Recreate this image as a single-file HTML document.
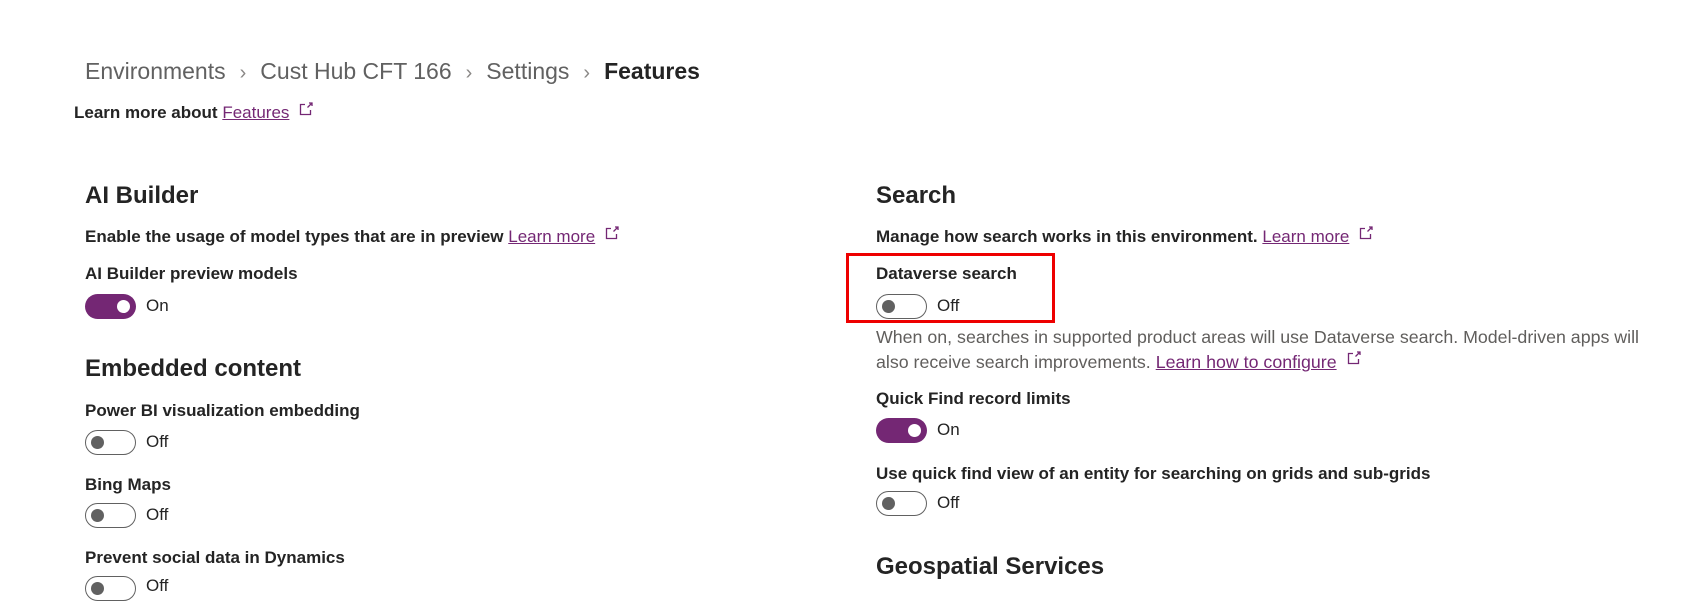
<!DOCTYPE html>
<html><head><meta charset="utf-8"><style>
body{margin:0;width:1700px;height:590px;background:#fff;position:relative;overflow:hidden;font-family:"Liberation Sans",sans-serif;color:#242424}
.a{position:absolute;white-space:nowrap;line-height:24px}
.bc{font-size:23px;color:#616161}
.bc i{font-style:normal;color:#8a8886;font-size:20px;padding:0 14px}
.h{font-size:24px;font-weight:bold;color:#242424;line-height:30px}
.t{font-size:17px;color:#242424;font-weight:bold}
.d{font-size:17.8px;color:#605e5c;line-height:26px}
a{color:#742774;text-decoration:underline;font-weight:normal}
.ext{display:inline-block;width:14px;height:14px;margin-left:10px;position:relative;top:-5px;vertical-align:middle}
.tg{position:absolute;width:51px;height:25px;border-radius:13px;box-sizing:border-box}
.off{border:1px solid #616161;background:#fff}
.off::after{content:"";position:absolute;left:5px;top:5px;width:13px;height:13px;border-radius:50%;background:#616161}
.on{background:#742774}
.on::after{content:"";position:absolute;right:6px;top:6px;width:13px;height:13px;border-radius:50%;background:#fff}
.tl{position:absolute;font-size:17px;color:#242424;line-height:24px}
</style></head><body>
<svg width="0" height="0" style="position:absolute"><symbol id="x" viewBox="0 0 14 14"><path d="M6 2.5H1.5V12.5H11.5V8M8.5 5.5L13 1M10 1H13V4" fill="none" stroke="#742774" stroke-width="1.3"/></symbol></svg>
<div class="a bc" style="left:85px;top:59px">Environments<i>&#x203A;</i>Cust Hub CFT 166<i>&#x203A;</i>Settings<i>&#x203A;</i><b style="color:#242424">Features</b></div>
<div class="a t" style="left:74px;top:101px">Learn more about <a>Features</a><svg class="ext"><use href="#x"/></svg></div>

<div class="a h" style="left:85px;top:181px">AI Builder</div>
<div class="a t" style="left:85px;top:225px">Enable the usage of model types that are in preview <a>Learn more</a><svg class="ext"><use href="#x"/></svg></div>
<div class="a t" style="left:85px;top:262px">AI Builder preview models</div>
<div class="tg on" style="left:85px;top:294px"></div><div class="tl" style="left:146px;top:294px">On</div>

<div class="a h" style="left:85px;top:354px">Embedded content</div>
<div class="a t" style="left:85px;top:399px">Power BI visualization embedding</div>
<div class="tg off" style="left:85px;top:430px"></div><div class="tl" style="left:146px;top:430px">Off</div>
<div class="a t" style="left:85px;top:473px">Bing Maps</div>
<div class="tg off" style="left:85px;top:503px"></div><div class="tl" style="left:146px;top:503px">Off</div>
<div class="a t" style="left:85px;top:546px">Prevent social data in Dynamics</div>
<div class="tg off" style="left:85px;top:576px"></div><div class="tl" style="left:146px;top:574px">Off</div>

<div class="a h" style="left:876px;top:181px">Search</div>
<div class="a t" style="left:876px;top:225px">Manage how search works in this environment. <a>Learn more</a><svg class="ext"><use href="#x"/></svg></div>
<div style="position:absolute;left:846px;top:253px;width:209px;height:70px;border:3px solid #e00;box-sizing:border-box"></div>
<div class="a t" style="left:876px;top:262px">Dataverse search</div>
<div class="tg off" style="left:876px;top:294px"></div><div class="tl" style="left:937px;top:294px">Off</div>
<div class="a d" style="left:876px;top:324px">When on, searches in supported product areas will use Dataverse search. Model-driven apps will</div>
<div class="a d" style="left:876px;top:349px">also receive search improvements. <a>Learn how to configure</a><svg class="ext"><use href="#x"/></svg></div>
<div class="a t" style="left:876px;top:387px">Quick Find record limits</div>
<div class="tg on" style="left:876px;top:418px"></div><div class="tl" style="left:937px;top:418px">On</div>
<div class="a t" style="left:876px;top:462px">Use quick find view of an entity for searching on grids and sub-grids</div>
<div class="tg off" style="left:876px;top:491px"></div><div class="tl" style="left:937px;top:491px">Off</div>
<div class="a h" style="left:876px;top:552px">Geospatial Services</div>
</body></html>
